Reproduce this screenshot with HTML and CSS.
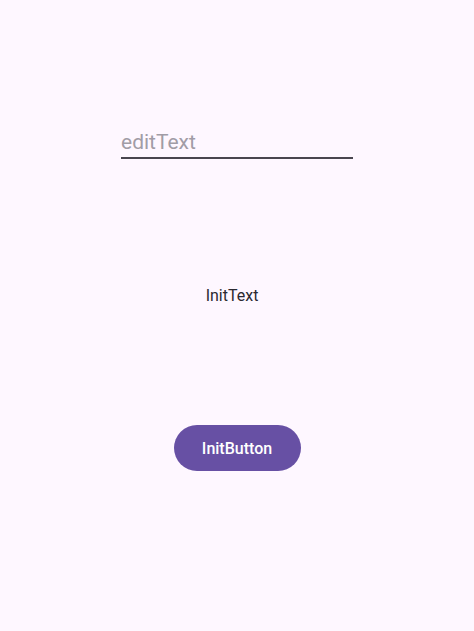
FILE: index.html
```html
<!DOCTYPE html>
<html>
<head>
<meta charset="utf-8">
<link rel="stylesheet" href="styles.css">
</head>
<body>
<main class="screen">
  <div class="field">
    <span class="hint">editText</span>
  </div>
  <p class="label">InitText</p>
  <button class="btn">InitButton</button>
</main>
</body>
</html>
```
FILE: styles.css
```css
html, body {
  margin: 0;
  padding: 0;
  background: #fef7ff;
}
.screen {
  width: 474px;
  height: 631px;
  display: flex;
  flex-direction: column;
  align-items: center;
  font-family: Roboto, "Liberation Sans", sans-serif;
}
.field {
  margin-top: 129px;
  width: 232px;
  height: 30px;
  border-bottom: 2px solid #49454f;
  box-sizing: border-box;
  display: flex;
  align-items: flex-end;
  padding-bottom: 3px;
}
.hint {
  font-size: 21px;
  line-height: 24px;
  color: #a19ca6;
}
.label {
  margin: 127px 10px 0 0;
  font-size: 16px;
  line-height: 20px;
  color: #2b2930;
}
.btn {
  margin-top: 119px;
  width: 127px;
  height: 46px;
  border: none;
  border-radius: 23px;
  background: #6750a4;
  color: #ffffff;
  font-family: Roboto, "Liberation Sans", sans-serif;
  font-size: 16px;
  font-weight: 500;
  padding: 0;
}
```
